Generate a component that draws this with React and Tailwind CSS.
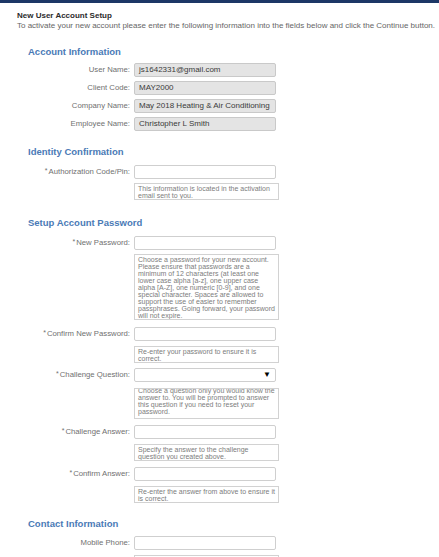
import React from "react";

function Label({ req, children }) {
  return (
    <div className="w-[130px] shrink-0 text-right text-[7.75px] leading-none text-[#707070] whitespace-nowrap">
      {req && <span className="relative top-[-1px] mr-[1px] text-[7px]">*</span>}
      {children}
    </div>
  );
}

function Row({ label, req, value, gray, select, className = "" }) {
  return (
    <div className={"flex items-center h-[14px] " + className}>
      <Label req={req}>{label}</Label>
      <div
        className={
          "ml-[4px] w-[142px] h-[14px] rounded-[2px] border flex items-center pl-[4px] pr-[4px] text-[8px] leading-none text-[#3a3a3a] " +
          (gray ? "bg-[#e4e4e4] border-[#c9c9c9]" : "bg-white border-[#cfcfcf]")
        }
      >
        <span className="flex-1 whitespace-nowrap">{value}</span>
        {select && <span className="text-[8px] text-black leading-none">▼</span>}
      </div>
    </div>
  );
}

function Help({ children, className = "", inner = "" }) {
  return (
    <div
      className={
        "ml-[134px] w-[145px] border border-[#d2d2d2] px-[3px] pt-[1px] text-[7px] leading-[7px] text-[#7d7d7d] overflow-hidden " +
        className
      }
    >
      <div className={inner}>{children}</div>
    </div>
  );
}

function Heading({ children, className = "" }) {
  return (
    <div className={"pl-[28px] text-[9.5px] leading-[12px] font-bold text-[#4a7ab6] " + className}>
      {children}
    </div>
  );
}

export default function App() {
  return (
    <div className="w-[439px] h-[557px] overflow-hidden bg-white font-['Liberation_Sans',Arial,sans-serif]">
      <div className="h-[3px] bg-[#1d3766]" />
      <div className="pt-[8px] pl-[17px]">
        <div className="text-[8px] leading-[10px] font-bold text-[#2b2b2b]">New User Account Setup</div>
        <div className="text-[8px] leading-[9px] text-[#666] whitespace-nowrap">
          To activate your new account please enter the following information into the fields below and click the Continue button.
        </div>
      </div>

      <Heading className="mt-[16px]">Account Information</Heading>
      <div className="mt-[5px] flex flex-col gap-[4px]">
        <Row label="User Name:" value="js1642331@gmail.com" gray />
        <Row label="Client Code:" value="MAY2000" gray />
        <Row label="Company Name:" value="May 2018 Heating & Air Conditioning" gray />
        <Row label="Employee Name:" value="Christopher L Smith" gray />
      </div>

      <Heading className="mt-[15px]">Identity Confirmation</Heading>
      <Row className="mt-[7px]" label="Authorization Code/Pin:" req />
      <Help className="mt-[4px]">This information is located in the activation email sent to you.</Help>

      <Heading className="mt-[17px]">Setup Account Password</Heading>
      <Row className="mt-[7px]" label="New Password:" req />
      <Help className="mt-[4px]">
        Choose a password for your new account. Please ensure that passwords are a minimum of 12 characters (at least one lower case alpha [a-z], one upper case alpha [A-Z], one numeric [0-9], and one special character. Spaces are allowed to support the use of easier to remember passphrases. Going forward, your password will not expire.
      </Help>
      <Row className="mt-[7px]" label="Confirm New Password:" req />
      <Help className="mt-[5px]">Re-enter your password to ensure it is correct.</Help>
      <Row className="mt-[5px]" label="Challenge Question:" req select />
      <Help className="mt-[6px] h-[31px]" inner="-mt-[3px]">
        Choose a question only you would know the answer to. You will be prompted to answer this question if you need to reset your password.
      </Help>
      <Row className="mt-[6px]" label="Challenge Answer:" req />
      <Help className="mt-[5px]">Specify the answer to the challenge question you created above.</Help>
      <Row className="mt-[6px]" label="Confirm Answer:" req />
      <Help className="mt-[5px]">Re-enter the answer from above to ensure it is correct.</Help>

      <Heading className="mt-[15px]">Contact Information</Heading>
      <Row className="mt-[6px]" label="Mobile Phone:" />
      <Help className="mt-[5px] h-[20px]"> </Help>
    </div>
  );
}
